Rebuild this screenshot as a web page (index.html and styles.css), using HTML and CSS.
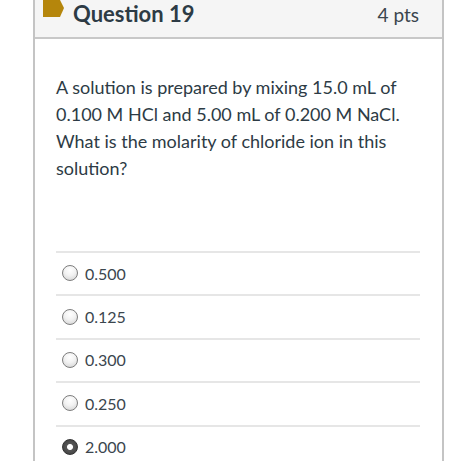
FILE: index.html
```html
<!DOCTYPE html>
<html>
<head>
<meta charset="utf-8">
<link rel="stylesheet" href="styles.css">
</head>
<body>
<div class="card">
  <div class="header">
    <svg class="bookmark" width="24" height="18" viewBox="0 0 24 18"><polygon points="0,0 17,0 21,8 17,17 0,17" fill="#b5860c"/></svg>
    <span class="title">Question 19</span>
    <span class="pts">4 pts</span>
  </div>
  <div class="content">
    <p class="question">A solution is prepared by mixing 15.0 mL of 0.100 M HCl and 5.00 mL of 0.200 M NaCl. What is the molarity of chloride ion in this solution?</p>
    <div class="answers">
      <div class="answer"><span class="radio"></span><span class="label">0.500</span></div>
      <div class="answer"><span class="radio"></span><span class="label">0.125</span></div>
      <div class="answer"><span class="radio"></span><span class="label">0.300</span></div>
      <div class="answer"><span class="radio"></span><span class="label">0.250</span></div>
      <div class="answer"><span class="radio checked"></span><span class="label">2.000</span></div>
    </div>
  </div>
</div>
</body>
</html>
```

FILE: styles.css
```css
html, body {
  margin: 0;
  padding: 0;
  background: #fff;
  font-family: Lato, "Noto Sans", sans-serif;
  color: #2d3b45;
}
.card {
  margin-left: 33px;
  width: 407px;
  border-left: 2px solid #c4c4c4;
  border-right: 2px solid #c4c4c4;
  height: 461px;
  overflow: hidden;
}
.header {
  height: 37px;
  background: #f5f5f5;
  border-bottom: 2px solid #c8c8c8;
  display: flex;
  align-items: center;
  position: relative;
  padding: 0 23px 0 38px;
}
.bookmark {
  position: absolute;
  left: 8px;
  top: 0;
}
.title {
  font-weight: 700;
  font-size: 22px;
  margin-top: -10px;
  color: #2d3b45;
}
.pts {
  margin-left: auto;
  font-size: 19px;
  margin-top: -9px;
  color: #3b464e;
}
.content {
  padding: 35px 22px 0 21px;
}
.question {
  margin: 0;
  font-size: 18px;
  line-height: 27px;
  width: 360px;
}
.answers {
  margin-top: 69px;
}
.answer {
  border-top: 2px solid #e6e6e6;
  height: 41.4px;
  display: flex;
  align-items: center;
  padding-left: 6px;
}
.radio {
  width: 14px;
  height: 14px;
  border-radius: 50%;
  border: 1px solid #7d7d7d;
  background: radial-gradient(circle at 50% 30%, #ffffff 0%, #f2f2f2 45%, #cfcfcf 100%);
  box-sizing: content-box;
  flex: none;
  margin-top: -1px;
}
.radio.checked {
  background: radial-gradient(circle at 50% 50%, #ffffff 0, #ffffff 2.5px, #555 3.5px, #3a3a3a 100%);
  border-color: #333;
}
.label {
  margin-left: 7px;
  font-size: 16px;
  margin-top: -1px;
  color: #3b464e;
}
```
